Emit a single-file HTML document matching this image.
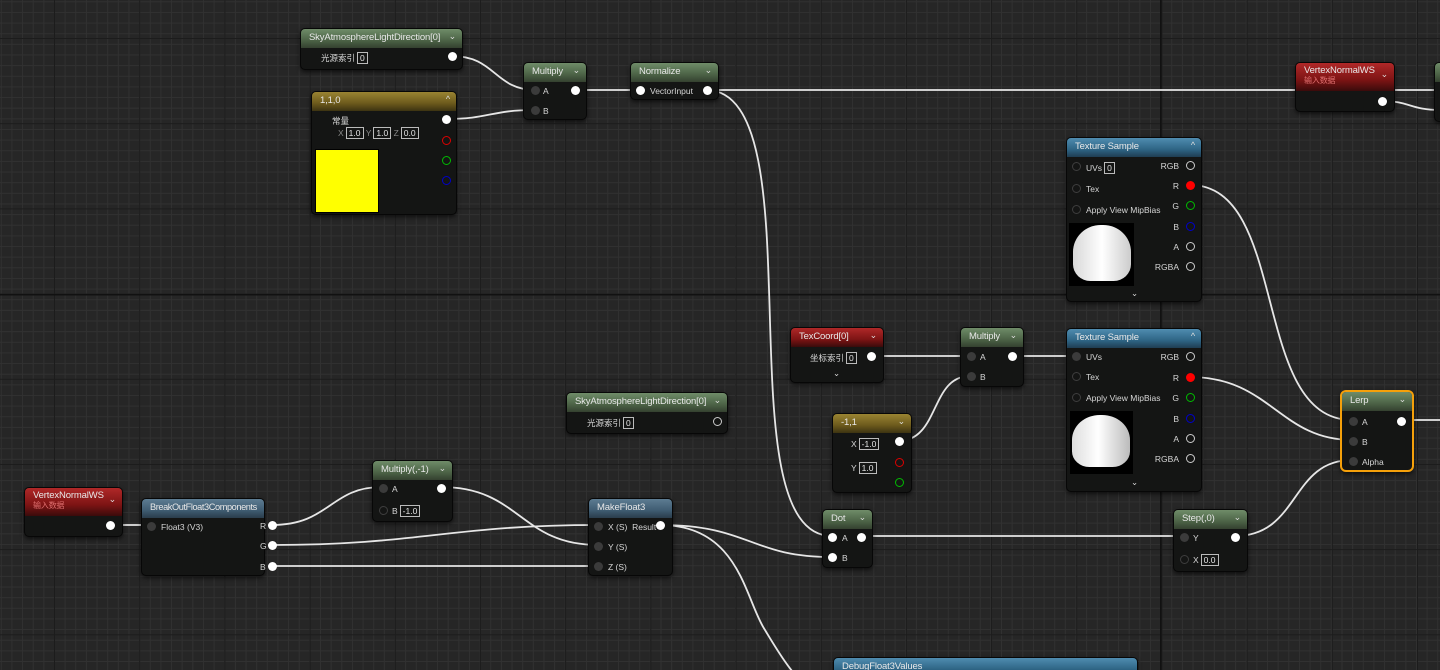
<!DOCTYPE html>
<html><head><meta charset="utf-8"><style>
*{margin:0;padding:0;box-sizing:border-box}
html,body{height:670px;overflow:hidden}
body{width:1440px;position:relative;font-family:"Liberation Sans","Noto Sans CJK SC",sans-serif;font-size:9px;color:#d8d8d8;
background-color:#262626;
background-image:
linear-gradient(90deg,#111 1.5px,transparent 1.5px),
linear-gradient(180deg,#111 1.5px,transparent 1.5px),
linear-gradient(90deg,#1c1c1c 1px,transparent 1px),
linear-gradient(180deg,#1c1c1c 1px,transparent 1px),
linear-gradient(90deg,#313131 1px,transparent 1px),
linear-gradient(180deg,#313131 1px,transparent 1px);
background-size:3000px 2000px,2000px 3000px,85.2px 85.2px,85.2px 85.2px,10.65px 10.65px,10.65px 10.65px;
background-position:1160px 0,0 294px,54px 0,0 38px,0.8px 0,0 1.3px;
background-repeat:no-repeat,no-repeat,repeat,repeat,repeat,repeat;}
.n{position:absolute;background:#141514;border:1px solid #070707;border-radius:5px;box-shadow:0 2px 4px rgba(0,0,0,.6)}
.h{height:19px;border-radius:4px 4px 0 0;padding:3px 0 0 8px;font-size:9.5px;letter-spacing:-0.15px;color:#e8e8e8;position:relative;white-space:nowrap}
.g{background:linear-gradient(180deg,#6f8c68,#4c6346 60%,#34412f)}
.y{background:linear-gradient(180deg,#9a8432,#6c5a1c 60%,#3d3412)}
.r{background:linear-gradient(180deg,#b02828,#7d1414 60%,#3a0b0b)}
.b{background:linear-gradient(180deg,#4f8cb0,#2e6585 60%,#1f3d52)}
.bb{background:linear-gradient(180deg,#5d7c92,#3f5c72 60%,#2a3d4c)}
.h .c{position:absolute;right:6px;top:2px;font-size:9px;color:#ddd}
.t{position:absolute;white-space:nowrap;font-size:8.5px;color:#d6d6d6}
.p{position:absolute;width:9px;height:9px;border-radius:50%;background:#fff}
.e{position:absolute;width:9px;height:9px;border-radius:50%;border:1.6px solid #ccc}
.i{position:absolute;width:9px;height:9px;border-radius:50%;background:#3b3b3b}
.io{position:absolute;width:9px;height:9px;border-radius:50%;border:1.3px solid #3e3e3e}
.bx{display:inline-block;border:1px solid #bbb;padding:0 2px;line-height:10px;margin-left:2px;color:#e4e4e4}
svg{position:absolute;left:0;top:0}
</style></head><body>
<svg width="1440" height="670" fill="none" stroke="#e6e6e6" stroke-width="1.8">
<path d="M452 56C495 56 495 90 535 90"/>
<path d="M446 119C490 119 490 110 535 110"/>
<path d="M575 90H640"/>
<path d="M706 90H1440"/>
<path d="M706 90C820 90 720 536 832 536"/>
<path d="M1382 101C1410 101 1410 110 1440 110"/>
<path d="M870 356H970"/>
<path d="M898 441C940 441 930 376 970 376"/>
<path d="M1012 356H1076"/>
<path d="M1190 185C1290 185 1250 420 1352 420"/>
<path d="M1190 377C1270 377 1280 440 1352 440"/>
<path d="M1235 536C1300 536 1290 460 1352 460"/>
<path d="M1400 420H1440"/>
<path d="M860 536H1183"/>
<path d="M660 525C750 525 750 557 832 557"/>
<path d="M660 525C740 525 745 600 765 630C780 655 790 670 800 680"/>
<path d="M110 525H150"/>
<path d="M272 525C330 525 330 487 382 487"/>
<path d="M441 487C520 487 520 545 598 545"/>
<path d="M272 545C420 545 450 525 598 525"/>
<path d="M272 566H598"/>
</svg>

<div class="n" style="left:300px;top:28px;width:163px;height:42px"><div class="h g">SkyAtmosphereLightDirection[0]<span class="c">⌄</span></div>
<span class="t" style="left:20px;top:23px">光源索引<span class="bx">0</span></span><span class="p" style="left:147px;top:23px"></span></div>

<div class="n" style="left:311px;top:91px;width:146px;height:124px"><div class="h y" style="border-radius:4px 4px 0 0">1,1,0<span class="c">^</span></div>
<span class="t" style="left:20px;top:23px">常量</span>
<span class="t" style="left:26px;top:35px;color:#888">X<span class="bx">1.0</span> Y<span class="bx">1.0</span> Z<span class="bx">0.0</span></span>
<div style="position:absolute;left:3px;top:57px;width:64px;height:64px;background:#ff0;border:1px solid #000"></div>
<span class="p" style="left:130px;top:23px"></span><span class="e" style="left:130px;top:44px;border-color:#d00"></span><span class="e" style="left:130px;top:64px;border-color:#0b0"></span><span class="e" style="left:130px;top:84px;border-color:#00c"></span></div>

<div class="n" style="left:523px;top:62px;width:64px;height:58px"><div class="h g">Multiply<span class="c">⌄</span></div>
<span class="i" style="left:7px;top:23px"></span><span class="t" style="left:19px;top:23px">A</span><span class="i" style="left:7px;top:43px"></span><span class="t" style="left:19px;top:43px">B</span><span class="p" style="left:47px;top:23px"></span></div>

<div class="n" style="left:630px;top:62px;width:89px;height:38px"><div class="h g">Normalize<span class="c">⌄</span></div>
<span class="p" style="left:5px;top:23px"></span><span class="t" style="left:19px;top:23px">VectorInput</span><span class="p" style="left:72px;top:23px"></span></div>

<div class="n" style="left:1295px;top:62px;width:100px;height:50px"><div class="h r" style="height:28px;line-height:10px">VertexNormalWS<br><span style="font-size:8px;color:#e07070">输入数据</span><span class="c" style="top:6px">⌄</span></div>
<span class="p" style="left:82px;top:34px"></span></div>
<div class="n" style="left:1434px;top:62px;width:20px;height:60px"><div class="h g"></div></div>

<div class="n" style="left:1066px;top:137px;width:136px;height:165px"><div class="h b">Texture Sample<span class="c">^</span></div>
<span class="io" style="left:5px;top:24px"></span><span class="t" style="left:19px;top:24px">UVs<span class="bx">0</span></span>
<span class="io" style="left:5px;top:46px"></span><span class="t" style="left:19px;top:46px">Tex</span>
<span class="io" style="left:5px;top:67px"></span><span class="t" style="left:19px;top:67px">Apply View MipBias</span>
<span class="t" style="right:22px;top:23px">RGB</span><span class="e" style="left:119px;top:23px"></span>
<span class="t" style="right:22px;top:43px">R</span><span class="p" style="left:119px;top:43px;background:#f00"></span>
<span class="t" style="right:22px;top:63px">G</span><span class="e" style="left:119px;top:63px;border-color:#0b0"></span>
<span class="t" style="right:22px;top:84px">B</span><span class="e" style="left:119px;top:84px;border-color:#00c"></span>
<span class="t" style="right:22px;top:104px">A</span><span class="e" style="left:119px;top:104px"></span>
<span class="t" style="right:22px;top:124px">RGBA</span><span class="e" style="left:119px;top:124px"></span>
<div style="position:absolute;left:2px;top:85px;width:65px;height:63px;background:#000"><div style="position:absolute;left:4px;top:2px;width:58px;height:56px;border-radius:48% 48% 30% 30%;background:linear-gradient(90deg,#d8d8d8,#fff 50%,#ccc)"></div></div>
<span class="t" style="left:64px;top:150px">⌄</span></div>

<div class="n" style="left:790px;top:327px;width:94px;height:56px"><div class="h r">TexCoord[0]<span class="c">⌄</span></div>
<span class="t" style="left:19px;top:24px">坐标索引<span class="bx">0</span></span><span class="p" style="left:76px;top:24px"></span><span class="t" style="left:42px;top:40px">⌄</span></div>

<div class="n" style="left:960px;top:327px;width:64px;height:60px"><div class="h g">Multiply<span class="c">⌄</span></div>
<span class="i" style="left:6px;top:24px"></span><span class="t" style="left:19px;top:24px">A</span><span class="i" style="left:6px;top:44px"></span><span class="t" style="left:19px;top:44px">B</span><span class="p" style="left:47px;top:24px"></span></div>

<div class="n" style="left:1066px;top:328px;width:136px;height:164px"><div class="h b">Texture Sample<span class="c">^</span></div>
<span class="i" style="left:5px;top:23px"></span><span class="t" style="left:19px;top:23px">UVs</span>
<span class="io" style="left:5px;top:43px"></span><span class="t" style="left:19px;top:43px">Tex</span>
<span class="io" style="left:5px;top:64px"></span><span class="t" style="left:19px;top:64px">Apply View MipBias</span>
<span class="t" style="right:22px;top:23px">RGB</span><span class="e" style="left:119px;top:23px"></span>
<span class="t" style="right:22px;top:44px">R</span><span class="p" style="left:119px;top:44px;background:#f00"></span>
<span class="t" style="right:22px;top:64px">G</span><span class="e" style="left:119px;top:64px;border-color:#0b0"></span>
<span class="t" style="right:22px;top:85px">B</span><span class="e" style="left:119px;top:85px;border-color:#00c"></span>
<span class="t" style="right:22px;top:105px">A</span><span class="e" style="left:119px;top:105px"></span>
<span class="t" style="right:22px;top:125px">RGBA</span><span class="e" style="left:119px;top:125px"></span>
<div style="position:absolute;left:3px;top:82px;width:63px;height:63px;background:#000"><div style="position:absolute;left:2px;top:4px;width:58px;height:52px;border-radius:48% 48% 30% 30%;background:linear-gradient(90deg,#ddd,#fff 45%,#bbb)"></div></div>
<span class="t" style="left:64px;top:148px">⌄</span></div>

<div class="n" style="left:832px;top:413px;width:80px;height:80px"><div class="h y">-1,1<span class="c">⌄</span></div>
<span class="t" style="left:18px;top:24px">X<span class="bx">-1.0</span></span><span class="p" style="left:62px;top:23px"></span>
<span class="t" style="left:18px;top:48px">Y<span class="bx">1.0</span></span><span class="e" style="left:62px;top:44px;border-color:#d00"></span>
<span class="e" style="left:62px;top:64px;border-color:#0b0"></span></div>

<div class="n" style="left:566px;top:392px;width:162px;height:42px"><div class="h g">SkyAtmosphereLightDirection[0]<span class="c">⌄</span></div>
<span class="t" style="left:20px;top:24px">光源索引<span class="bx">0</span></span><span class="e" style="left:146px;top:24px"></span></div>

<div class="n" style="left:1340px;top:390px;width:74px;height:82px;border:2px solid #f5a00a;border-radius:6px"><div class="h g">Lerp<span class="c">⌄</span></div>
<span class="i" style="left:7px;top:25px"></span><span class="t" style="left:20px;top:25px">A</span>
<span class="i" style="left:7px;top:45px"></span><span class="t" style="left:20px;top:45px">B</span>
<span class="i" style="left:7px;top:65px"></span><span class="t" style="left:20px;top:65px">Alpha</span><span class="p" style="left:55px;top:25px"></span></div>

<div class="n" style="left:1173px;top:509px;width:75px;height:63px"><div class="h g">Step(,0)<span class="c">⌄</span></div>
<span class="i" style="left:6px;top:23px"></span><span class="t" style="left:19px;top:23px">Y</span>
<span class="io" style="left:6px;top:45px"></span><span class="t" style="left:19px;top:44px">X<span class="bx">0.0</span></span><span class="p" style="left:57px;top:23px"></span></div>

<div class="n" style="left:822px;top:509px;width:51px;height:59px"><div class="h g">Dot<span class="c">⌄</span></div>
<span class="p" style="left:5px;top:23px"></span><span class="t" style="left:19px;top:23px">A</span>
<span class="p" style="left:5px;top:43px"></span><span class="t" style="left:19px;top:43px">B</span><span class="p" style="left:34px;top:23px"></span></div>

<div class="n" style="left:588px;top:498px;width:85px;height:78px"><div class="h bb">MakeFloat3</div>
<span class="i" style="left:5px;top:23px"></span><span class="t" style="left:19px;top:23px">X (S)&nbsp; Result</span><span class="p" style="left:67px;top:22px"></span>
<span class="i" style="left:5px;top:43px"></span><span class="t" style="left:19px;top:43px">Y (S)</span>
<span class="i" style="left:5px;top:63px"></span><span class="t" style="left:19px;top:63px">Z (S)</span></div>

<div class="n" style="left:372px;top:460px;width:81px;height:62px"><div class="h g">Multiply(,-1)<span class="c">⌄</span></div>
<span class="i" style="left:6px;top:23px"></span><span class="t" style="left:19px;top:23px">A</span>
<span class="io" style="left:6px;top:45px"></span><span class="t" style="left:19px;top:44px">B<span class="bx">-1.0</span></span><span class="p" style="left:64px;top:23px"></span></div>

<div class="n" style="left:141px;top:498px;width:124px;height:78px"><div class="h bb" style="letter-spacing:-0.4px;font-size:9.2px">BreakOutFloat3Components</div>
<span class="i" style="left:5px;top:23px"></span><span class="t" style="left:19px;top:23px">Float3 (V3)</span>
<span class="t" style="left:118px;top:22px">R</span><span class="p" style="left:126px;top:22px"></span>
<span class="t" style="left:118px;top:42px">G</span><span class="p" style="left:126px;top:42px"></span>
<span class="t" style="left:118px;top:63px">B</span><span class="p" style="left:126px;top:63px"></span></div>

<div class="n" style="left:24px;top:487px;width:99px;height:50px"><div class="h r" style="height:28px;line-height:10px">VertexNormalWS<br><span style="font-size:8px;color:#e07070">输入数据</span><span class="c" style="top:6px">⌄</span></div>
<span class="p" style="left:81px;top:33px"></span></div>

<div class="n" style="left:833px;top:657px;width:305px;height:30px"><div class="h b">DebugFloat3Values</div></div>
</body></html>
